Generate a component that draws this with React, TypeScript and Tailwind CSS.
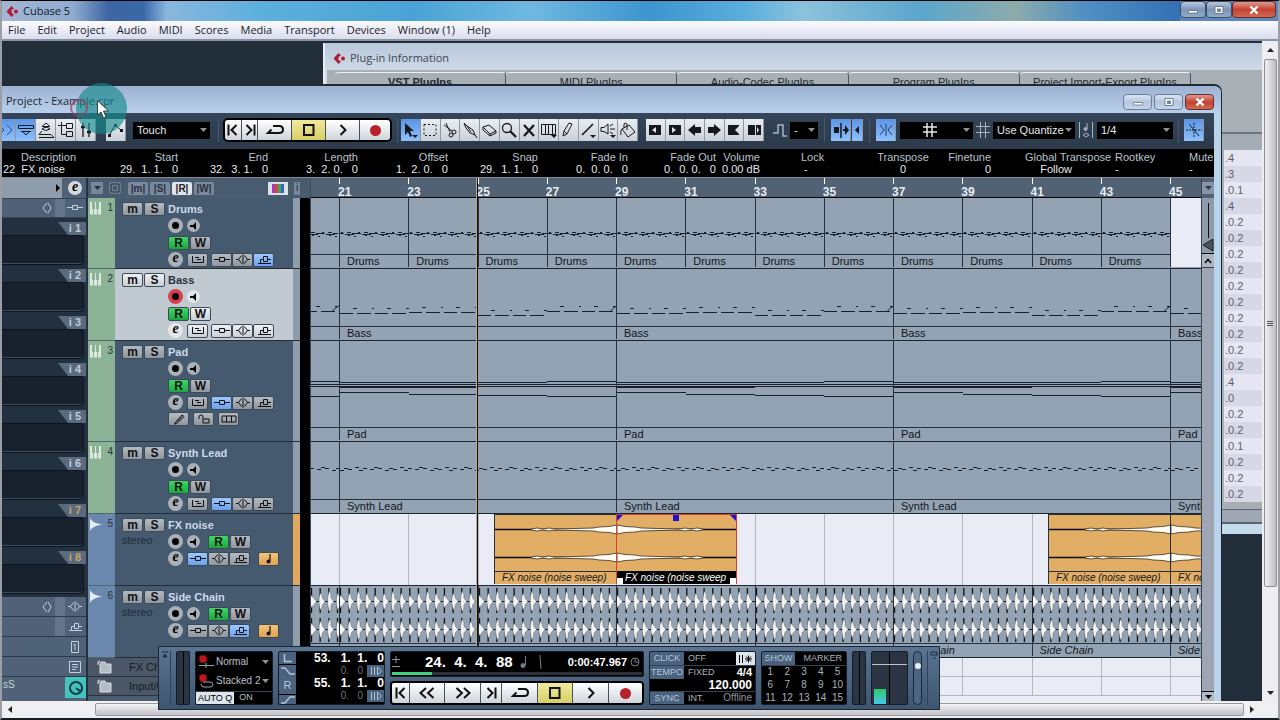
import React from "react";

type Kind = "midi" | "audio";
interface Track {
  n: number;
  name: string;
  kind: Kind;
  height: string;
  selected?: boolean;
  active?: "linear" | "musical" | "lane";
  extra?: boolean;
  strip?: string;
}

const tracks: Track[] = [
  { n: 1, name: "Drums", kind: "midi", height: "h-[71px]", active: "lane" },
  { n: 2, name: "Bass", kind: "midi", height: "h-[72px]", selected: true },
  { n: 3, name: "Pad", kind: "midi", height: "h-[101px]", active: "linear", extra: true },
  { n: 4, name: "Synth Lead", kind: "midi", height: "h-[72px]", active: "linear" },
  { n: 5, name: "FX noise", kind: "audio", height: "h-[72px]", active: "linear", strip: "bg-[#e2a65c]" },
  { n: 6, name: "Side Chain", kind: "audio", height: "h-[72px]", active: "lane" },
];

/* ---------- icons ---------- */

const glyphs: Record<string, React.ReactNode> = {
  linear: <path d="M1 5.500H6M12 5.500H17M6.500 3.500H11.500V7.500H6.500Z" />,
  musical: <path d="M2 5.500H5M13 5.500H16M9 0.500V10.500M7.500 1.500L4.500 5.500L7.500 9.500M10.500 1.500L13.500 5.500L10.500 9.500" />,
  lane: <path d="M3 9.500H16M5.500 9V5.500H8M8.500 2.500H12.500V7.500H8.500ZM13 5.500H16" />,
  inserts: <path d="M3.500 2V8.500H14.500V2M6 3.500H10M8 5.500H12" />,
  pencil: <path d="M5 10L12 2L14 3.500L7 10.500L4.500 11ZM6.500 9L12 3.500" />,
  lock: <path d="M8 6H14V10H8ZM4 6V4Q4 2 6 2Q8 2 8 4V6" />,
  film: <path d="M2 3H16V9H2ZM6.500 3V9M11.500 3V9" />,
};

function Svg({ w, h, children, className = "" }: { w: number; h: number; children: React.ReactNode; className?: string }) {
  return (
    <svg width={w} height={h} viewBox={`0 0 ${w} ${h}`} fill="none" stroke="currentColor" className={`shrink-0 ${className}`} aria-hidden="true">
      {children}
    </svg>
  );
}

function Logo() {
  return (
    <Svg w={13} h={13} className="text-[#b01c38]">
      <path d="M5.500 1L0.500 6.500L5.500 12L8 9.500L5.500 8V5L8 3.500Z" fill="#b01c38" stroke="none" />
      <circle cx="10" cy="6.500" r="2" fill="#b01c38" stroke="none" />
    </Svg>
  );
}

function Caret({ className = "text-[#8b939c]" }: { className?: string }) {
  return (
    <Svg w={7} h={4} className={className}>
      <path d="M0 0H7L3.500 4Z" fill="currentColor" stroke="none" />
    </Svg>
  );
}

/* ---------- window chrome ---------- */

function WinButton({ kind, large }: { kind: "min" | "max" | "close"; large?: boolean }) {
  const color =
    kind === "close"
      ? "bg-linear-to-b from-[#dc9a90] via-[#c4402f] to-[#cf6a55] text-white border-[#6b2a2a]"
      : large
        ? "bg-linear-to-b from-[#b9c8dc] via-[#7d95b8] to-[#93abc9] text-white border-[#3c4d66]"
        : "bg-linear-to-b from-[#dde7f4] via-[#b3c5de] to-[#c6d6ea] text-white border-[#6a7c98]";
  const size = large ? (kind === "close" ? "w-11 h-[17px]" : "w-[26px] h-[17px]") : "w-[29px] h-4";
  return (
    <button aria-label={kind} className={`flex items-center justify-center rounded-sm border ${color} ${size}`}>
      <Svg w={12} h={10}>
        {kind === "min" && <path d="M1.500 5.500H10.500V8H1.500Z" fill="#fff" stroke="#55657c" strokeWidth="0.700" />}
        {kind === "max" && (
          <g>
            <path d="M2 1.500H10V8.500H2Z" fill="#fff" stroke="#55657c" strokeWidth="0.800" />
            <path d="M4.500 4H7.500V6.500H4.500Z" fill="#7d95b8" stroke="#55657c" strokeWidth="0.800" />
          </g>
        )}
        {kind === "close" && <path d="M2.500 1.500L9.500 8.500M9.500 1.500L2.500 8.500" stroke="#fff" strokeWidth="2.400" />}
      </Svg>
    </button>
  );
}

function TitleBar() {
  return (
    <header className="flex h-[20px] shrink-0 items-center">
      <div className="flex h-full flex-1 items-center bg-[linear-gradient(90deg,#a3b6d4_0%,#91abd0_6%,#3d66a3_9%,#3a68a8_12%,#8ab6de_14%,#5bb0dd_22%,#4aa3d6_35%,#6fb8e0_45%,#3d94cf_55%,#59aedd_63%,#8cc2dc_68%,#5aa6cc_78%,#8dabab_86%,#4f8fc4_92%,#3370b4_100%)] pl-1">
        <Logo />
        <h1 className="ml-1 font-[Open_Sans,sans-serif] text-[11px] leading-5 text-[#101b2b]">Cubase 5</h1>
      </div>
      <div className="flex h-full items-start bg-[#5c88bb] pr-[2px]">
        <WinButton kind="min" large />
        <WinButton kind="max" large />
        <WinButton kind="close" large />
      </div>
    </header>
  );
}

const menus = ["File", "Edit", "Project", "Audio", "MIDI", "Scores", "Media", "Transport", "Devices", "Window (1)", "Help"];

function MenuBar() {
  return (
    <nav className="flex h-5 shrink-0 items-center gap-3 border-b-2 border-[#8c93a0] bg-linear-to-b from-[#fbfbfe] to-[#d9dcee] pl-[6px] font-[Open_Sans,sans-serif] text-[11px] text-[#1c1c28]">
      {menus.map((m) => (
        <button key={m} className="leading-4">
          {m}
        </button>
      ))}
    </nav>
  );
}

/* ---------- plug-in information window ---------- */

const versions = [".4", ".3", ".0.1", ".4", ".0.2", ".0.2", ".0.2", ".0.2", ".0.2", ".0.2", ".0.2", ".0.2", ".0.2", ".0.2", ".4", ".0", ".0.2", ".0.2", ".0.1", ".0.2", ".0.2", ".0.2"];
const pluginTabs = ["VST PlugIns", "MIDI PlugIns", "Audio-Codec PlugIns", "Program PlugIns", "Project Import-Export PlugIns"];

function PluginWindow() {
  return (
    <section className="absolute top-[2px] right-0 left-[321px] flex h-[491px] flex-col border-l-2 border-[#e8eef5] bg-[#a8b0b6]">
      <div className="flex h-[27px] shrink-0 items-center gap-1 bg-linear-to-b from-[#b8c7da] to-[#ced9e6] pt-1 pl-2">
        <Logo />
        <h2 className="font-[Open_Sans,sans-serif] text-[11px] text-[#3c4655]">Plug-in Information</h2>
      </div>
      <div className="flex shrink-0 border-l-2 border-[#d5dbe3] pt-[2px] pr-[71px] pl-2">
        {pluginTabs.map((t, i) => (
          <button
            key={t}
            className={`h-5 flex-1 truncate rounded-t border-t border-r border-t-[#eef0f2] border-r-[#4d545b] text-[11px] text-[#23282e] ${i === 0 ? "font-bold" : ""}`}
          >
            {t}
          </button>
        ))}
      </div>
      <div className="h-[42px] shrink-0 border-b-2 border-[#6c757d]" />
      <div className="h-4 shrink-0 bg-[#a5adb4]" />
      <div className="flex min-h-0 flex-1 flex-col items-end overflow-hidden">
        {versions.map((v, i) => (
          <div key={i} className={`h-4 w-[38px] shrink-0 pl-[1px] text-[11px] leading-4 text-[#5c5f6a] ${i % 2 ? "bg-[#d7d7e6]" : "bg-[#e6e6f2]"}`}>
            {v}
          </div>
        ))}
      </div>
      <div className="h-[15px] shrink-0 border-t border-b-2 border-[#5b646e] bg-[#9ea7b3]" />
      <div className="h-2.5 shrink-0 bg-[#c4dcec]" />
    </section>
  );
}

/* ---------- project toolbar ---------- */

function ToolBtn({ label, on, w = "w-5", children }: { label: string; on?: boolean; w?: string; children: React.ReactNode }) {
  return (
    <button
      aria-label={label}
      className={`flex h-[22px] shrink-0 items-center justify-center border-r border-[#8f979f] text-[#15181c] ${w} ${on ? "bg-linear-to-b from-[#5c94e6] to-[#8fc0fb]" : "bg-linear-to-b from-[#e9eef2] to-[#c9d1d8]"}`}
    >
      <Svg w={18} h={18}>{children}</Svg>
    </button>
  );
}

function Drop({ label, value, w }: { label: string; value: string; w: string }) {
  return (
    <label className={`flex h-[17px] shrink-0 items-center bg-black pr-[3px] pl-1 ${w}`}>
      <select aria-label={label} className="min-w-0 flex-1 appearance-none bg-transparent text-[11px] leading-4 text-[#e2e8ee] outline-none">
        <option>{value}</option>
      </select>
      <Caret />
    </label>
  );
}

const Sep = () => <span className="block h-6 w-px shrink-0 bg-[#47586c]" />;

function TransportKey({ label, w, on, children }: { label: string; w: string; on?: boolean; children: React.ReactNode }) {
  return (
    <button
      aria-label={label}
      className={`flex h-full items-center justify-center border-r border-[#4a5059] text-[#111] last:border-r-0 ${w} ${on ? "bg-linear-to-b from-[#f0ea9c] to-[#d8cf62]" : "bg-linear-to-b from-[#ffffff] to-[#cfd5dc]"}`}
    >
      {children}
    </button>
  );
}

const icoPrev = <Svg w={12} h={14}><path d="M1.500 1.500V12.500M9.500 2L4.500 7L9.500 12" strokeWidth="2" /></Svg>;
const icoNext = <Svg w={12} h={14}><path d="M10.500 1.500V12.500M2.500 2L7.500 7L2.500 12" strokeWidth="2" /></Svg>;
const icoCycle = <Svg w={20} h={14}><path d="M8 3H15Q18 3.500 18 6.500Q18 10 14 10H3M6.500 6.500L3 10H10" strokeWidth="2" /></Svg>;
const icoStop = <Svg w={14} h={14}><path d="M2 2H11.500V12H2Z" strokeWidth="2" /></Svg>;
const icoPlay = <Svg w={10} h={14}><path d="M2.500 2L7.500 7L2.500 12" strokeWidth="2" /></Svg>;
const icoRew = <Svg w={18} h={14}><path d="M8 2L2.500 7L8 12M15.500 2L10 7L15.500 12" strokeWidth="2" /></Svg>;
const icoFwd = <Svg w={18} h={14}><path d="M2.500 2L8 7L2.500 12M10 2L15.500 7L10 12" strokeWidth="2" /></Svg>;
const icoRec = <span className="size-[11px] rounded-full bg-[#b8202a]" />;

const corner = <path d="M11 14H17L14 17Z" fill="currentColor" stroke="none" />;

function Toolbar() {
  return (
    <div className="flex h-9 shrink-0 items-center bg-linear-to-b from-[#35465a] to-[#2b394a] pb-[2px]">
      <div className="flex">
        <ToolBtn label="Setup" on w="w-[14px]"><path d="M1 6L4 9L1 12M7 4L12 9L7 14" stroke="#2c4f8c" /></ToolBtn>
        <ToolBtn label="Info Line" on><path d="M1.500 4.500H16.500V7.500H1.500ZM4 10.500H14M6 11L9 14L12 11" /></ToolBtn>
        <ToolBtn label="Overview"><path d="M9 2L5 5.500H13ZM5 8Q9 4.500 13 8Q9 11 5 8M5 10L2 13.500H14M2 16.500H17L14 13.500" /></ToolBtn>
        <ToolBtn label="Pool"><path d="M1 4.500H9M4.500 1V13.500H9M9.500 2.500H15.500V7.500H9.500ZM9.500 10.500H15.500V15.500H9.500Z" /></ToolBtn>
        <ToolBtn label="Mixer"><path d="M6 2V16M12 2V16" strokeWidth="1.300" /><path d="M4 6H8M10 11H14" strokeWidth="2.500" /></ToolBtn>
      </div>
      <div className="ml-[10px]">
        <ToolBtn label="Automation"><path d="M2 15L8 4L15 10" /><path d="M1 13H4V16H1ZM7 3H10V6H7ZM13 8H16V11H13Z" fill="currentColor" stroke="none" /></ToolBtn>
      </div>
      <div className="mr-2 ml-[7px]"><Drop label="Automation mode" value="Touch" w="w-[77px]" /></div>
      <Sep />
      <div className="mr-[5px] ml-1 flex h-6 shrink-0 overflow-hidden rounded-[5px] border-2 border-black">
        <TransportKey label="Previous" w="w-[17px]">{icoPrev}</TransportKey>
        <TransportKey label="Next" w="w-4">{icoNext}</TransportKey>
        <TransportKey label="Cycle" w="w-[34px]">{icoCycle}</TransportKey>
        <TransportKey label="Stop" w="w-[34px]" on>{icoStop}</TransportKey>
        <TransportKey label="Play" w="w-[34px]">{icoPlay}</TransportKey>
        <TransportKey label="Record" w="w-[30px]">{icoRec}</TransportKey>
      </div>
      <Sep />
      <div className="ml-[3px] grid w-[237px] shrink-0 grid-cols-12">
        <ToolBtn w="w-auto" label="Select" on><path d="M4 2V14L7 11L9 16L11 15L9 10L13 10Z" fill="currentColor" stroke="none" />{corner}</ToolBtn>
        <ToolBtn w="w-auto" label="Range"><path d="M3 3.500H15V14.500H3Z" strokeDasharray="2 2" /></ToolBtn>
        <ToolBtn w="w-auto" label="Split"><path d="M3 4L11 10M5 2L9 11" /><circle cx="13" cy="11" r="2" /><circle cx="10" cy="14" r="2" /></ToolBtn>
        <ToolBtn w="w-auto" label="Glue"><path d="M3 2L6 5L12 9L14 14L9 12L5 7ZM14 14L16 17M6 5L10 11" /></ToolBtn>
        <ToolBtn w="w-auto" label="Erase"><path d="M3 6L9 4L16 10L10 13ZM3 6V9L10 15V13M10 15L16 12V10" /></ToolBtn>
        <ToolBtn w="w-auto" label="Zoom"><circle cx="7" cy="7" r="4.500" strokeWidth="1.300" /><path d="M10 10L16 16" strokeWidth="2.200" /></ToolBtn>
        <ToolBtn w="w-auto" label="Mute"><path d="M4 4L14 15M14 4L4 15" strokeWidth="2.200" /></ToolBtn>
        <ToolBtn w="w-auto" label="Time Warp"><path d="M1.500 3.500H15.500V13.500H1.500ZM5.500 3V13M8.500 3V13M12.500 3V13" />{corner}</ToolBtn>
        <ToolBtn w="w-auto" label="Draw"><path d="M4 15L5 10L10 2L13 3L8 13ZM5 10L8 13" /></ToolBtn>
        <ToolBtn w="w-auto" label="Line"><path d="M3 14L14 3" strokeWidth="1.600" />{corner}</ToolBtn>
        <ToolBtn w="w-auto" label="Play tool"><path d="M2 6.500H5L9 3V13L5 10.500H2ZM11 8H16M11 5L14 3M11 11L14 13" />{corner}</ToolBtn>
        <ToolBtn w="w-auto" label="Color"><path d="M3 8L10 4L16 11L9 16ZM3 8Q1 10 2 14M8 9V3Q6 1 5 3V7" /></ToolBtn>
      </div>
      <div className="mr-2 ml-[8px] grid w-[118px] shrink-0 grid-cols-6">
        {[
          <path key="a" d="M3 4H15V14H3ZM10 6L6 9L10 12Z" fill="currentColor" fillRule="evenodd" stroke="none" />,
          <path key="b" d="M3 4H15V14H3ZM6 6L10 9L6 12Z" fill="currentColor" fillRule="evenodd" stroke="none" />,
          <path key="c" d="M2 9L9 3V6H15V12H9V15Z" fill="currentColor" stroke="none" />,
          <path key="d" d="M16 9L9 3V6H3V12H9V15Z" fill="currentColor" stroke="none" />,
          <path key="e" d="M3 4H14V5L10 9L14 13V14H3Z" fill="currentColor" stroke="none" />,
          <path key="f" d="M3 4H10V14H3ZM11 4H16V14H11ZM12 6L14 9L12 12Z" fill="currentColor" fillRule="evenodd" stroke="none" />,
        ].map((p, i) => (
          <ToolBtn key={i} w="w-auto" label={`Nudge ${i + 1}`}>{p}</ToolBtn>
        ))}
      </div>
      <Svg w={18} h={18} className="text-[#a9b3be]"><path d="M1 12H6V4H11V15H15" strokeWidth="1.500" /></Svg>
      <div className="mr-1.5"><Drop label="Fade" value=" -" w="w-[28px]" /></div>
      <Sep />
      <div className="mx-1.5 flex gap-px">
        <ToolBtn label="Autoscroll" on><path d="M9 2V17" strokeWidth="1.500" /><path d="M2 6H7V12H2ZM11 8H13V4L17 9L13 14V10H11Z" fill="currentColor" stroke="none" /></ToolBtn>
        <ToolBtn label="Suspend" on w="w-[11px]"><path d="M11 5V13L7 9Z" fill="currentColor" stroke="none" /></ToolBtn>
      </div>
      <Sep />
      <div className="mr-1 ml-1.5"><ToolBtn label="Snap" on><path d="M9 3V15M3 4L7 9L3 14M15 4L11 9L15 14" stroke="#203a68" /></ToolBtn></div>
      <label className="flex h-[17px] w-[73px] shrink-0 items-center justify-end bg-black pr-[3px] text-[#e2e8ee]">
        <Svg w={16} h={14} className="mr-[25px]"><path d="M1 4H15M1 9H15M5 0V14M10 0V14" strokeWidth="1.500" /></Svg>
        <select aria-label="Snap type" className="w-0 appearance-none"><option>Grid</option></select>
        <Caret />
      </label>
      <Svg w={14} h={16} className="mx-[3px] text-[#a9b3be]"><path d="M0 4.500H14M0 10.500H14M4.500 0V16M9.500 0V16" /></Svg>
      <Drop label="Grid type" value="Use Quantize" w="w-[82px]" />
      <Svg w={16} h={18} className="mx-[3px] text-[#a9b3be]"><path d="M1.500 1V17M14.500 1V17M9 2V8M8 12L5 14L8 16L11 14Z" /><circle cx="7.500" cy="8" r="1.500" fill="currentColor" /></Svg>
      <Drop label="Quantize" value="1/4" w="w-[76px]" />
      <span className="ml-[5px]"><Sep /></span>
      <div className="ml-[5px]"><ToolBtn label="Snap to zero crossing" on><path d="M1 9H17M9 2V16" strokeDasharray="2 1" /><path d="M4 3L14 15" /></ToolBtn></div>
    </div>
  );
}

const info: { k: string; v: string; c: string }[] = [
  { k: "Start", v: "29.  1. 1.   0", c: "w-[90px] text-right" },
  { k: "End", v: "32.  3. 1.   0", c: "w-[90px] text-right" },
  { k: "Length", v: "3.  2. 0.   0", c: "w-[90px] text-right" },
  { k: "Offset", v: "1.  2. 0.   0", c: "w-[90px] text-right" },
  { k: "Snap", v: "29.  1. 1.   0", c: "w-[90px] text-right" },
  { k: "Fade In", v: "0.  0. 0.   0", c: "w-[90px] text-right" },
  { k: "Fade Out", v: "0.  0. 0.   0", c: "w-[88px] text-right" },
  { k: "Volume", v: "0.00 dB", c: "w-[44px] text-right" },
  { k: "Lock", v: " -", c: "w-[117px] pl-[41px]" },
  { k: "Transpose", v: "0", c: "w-[52px] text-center" },
  { k: "Finetune", v: "0", c: "w-[62px] text-right" },
  { k: "Global Transpose", v: "     Follow", c: "w-[124px] pl-[34px]" },
  { k: "Rootkey", v: "-", c: "w-[74px]" },
  { k: "Mute", v: "-", c: "w-[24px]" },
];

function InfoLine() {
  return (
    <dl className="flex h-7 shrink-0 overflow-hidden bg-black pt-[2px] text-[11px] leading-[12px] whitespace-pre text-[#e4e8ec]">
      <div className="w-[86px] shrink-0 pl-[1px]">
        <dt className="pl-[18px] text-[#b9c2cd]">Description</dt>
        <dd>22  FX noise</dd>
      </div>
      {info.map((f) => (
        <div key={f.k} className={`shrink-0 ${f.c}`}>
          <dt className="text-[#b9c2cd]">{f.k}</dt>
          <dd>{f.v}</dd>
        </div>
      ))}
    </dl>
  );
}

/* ---------- inspector ---------- */

function Round({ label, children, className }: { label: string; children: React.ReactNode; className: string }) {
  return (
    <button aria-label={label} className={`flex shrink-0 items-center justify-center rounded-full ${className}`}>
      {children}
    </button>
  );
}

const eGlyph = <span className="pb-[3px] font-[Liberation_Serif,serif] text-[14px] leading-[12px] font-bold italic">e</span>;

const inspectorTail = ["musical", "lane", "info", "notes"];

function Inspector() {
  return (
    <aside className="flex w-[86px] shrink-0 flex-col border-r-2 border-[#25313e] bg-[#506277] text-[#c5d0dc]">
      <div className="flex h-5 shrink-0 items-center">
        <div className="flex h-full w-[60px] items-center justify-end bg-[#8f9cac] pr-px">
          <Svg w={5} h={8} className="text-black"><path d="M0 0V8L4 4Z" fill="currentColor" stroke="none" /></Svg>
        </div>
        <Round label="Edit channel" className="ml-1.5 size-[14px] bg-[#d4dae0] text-black">{eGlyph}</Round>
      </div>
      <div className="flex h-5 shrink-0 items-center border-y border-[#334253]">
        <Svg w={10} h={12} className="ml-10"><path d="M5 1L1 6L5 11M6 1L9 6L6 11" /></Svg>
        <span className="ml-[3px] h-full w-[10px] bg-[#64758a]" />
        <Svg w={18} h={12} className="ml-px">{glyphs.linear}</Svg>
      </div>
      {[1, 2, 3, 4, 5, 6, 7, 8].map((i) => (
        <div key={i} className="flex h-[47px] shrink-0 flex-col bg-[#223040]">
          <div className="flex h-[17px] justify-end">
            <span
              className={`mt-[4px] h-[13px] w-7 bg-[#5a6b7f] pr-[5px] text-right text-[11px] leading-[13px] font-bold [clip-path:polygon(0_0,100%_0,100%_100%,36%_100%)] ${i > 6 ? "text-[#c9a55e]" : "text-[#c3ccd7]"}`}
            >
              i {i}
            </span>
          </div>
          <div className="mr-[2px] flex-1 rounded-r border border-l-0 border-[#0c141d] bg-[#17222e] shadow-[inset_0_-1px_#3b4c5f]" />
        </div>
      ))}
      <div className="h-[3px] shrink-0 bg-[#223040]" />
      {inspectorTail.map((g, i) => (
        <div key={g} className="flex h-5 shrink-0 items-center border-b border-[#2c3a4a]">
          {i === 0 ? <Svg w={10} h={12} className="ml-10"><path d="M5 1L1 6L5 11M6 1L9 6L6 11" /></Svg> : <span className="ml-10 w-[10px]" />}
          <span className={`mr-px ml-[3px] h-full w-[10px] ${i < 2 ? "bg-[#64758a]" : ""}`} />
          <Svg w={18} h={12}>
            {glyphs[g] ?? (g === "info" ? <path d="M5.500 0.500H12.500V11.500H5.500ZM9 3V9M7.500 4L9 3" /> : <path d="M3.500 0.500H14.500V11.500H3.500ZM6 3.500H12M6 6H12M6 8.500H10" />)}
          </Svg>
        </div>
      ))}
      <div className="flex flex-1 items-start justify-between pl-px text-[10px]">
        <span>sS</span>
        <button aria-label="Quick controls" className="flex size-[21px] items-center justify-center bg-[#44c2be] text-[#0f3c44]">
          <Svg w={16} h={16}><circle cx="8" cy="8" r="6" strokeWidth="2" /><path d="M8 8L12 11" strokeWidth="2" /></Svg>
        </button>
      </div>
    </aside>
  );
}

/* ---------- track list ---------- */

function Chip({ label, tone, children }: { label: string; tone: "plain" | "blue" | "green" | "light" | "orange"; children: React.ReactNode }) {
  const tones = {
    plain: "bg-linear-to-b from-[#b4bac1] to-[#8f969e]",
    blue: "bg-linear-to-b from-[#9cc8ff] to-[#6aa2ee]",
    green: "bg-linear-to-b from-[#41d668] to-[#17a83e]",
    light: "bg-linear-to-b from-[#eef1f4] to-[#cbd0d6]",
    orange: "bg-linear-to-b from-[#f3c57c] to-[#dfa04f]",
  };
  return (
    <button
      aria-label={label}
      className={`flex h-[14px] w-[21px] shrink-0 items-center justify-center rounded-xs border border-[#3d4955] text-[12px] leading-[12px] font-bold text-[#0e1013] ${tones[tone]}`}
    >
      {children}
    </button>
  );
}

function TrackRow({ t }: { t: Track }) {
  const base = t.selected ? "light" : "plain";
  const round = t.selected ? "bg-[#e3e7eb] text-black" : "bg-[#a9b0b8] text-black";
  const midi = t.kind === "midi";
  const rw = (
    <>
      <Chip label={`${t.name} read`} tone="green">R</Chip>
      <Chip label={`${t.name} write`} tone={base}>W</Chip>
    </>
  );
  return (
    <li className={`flex shrink-0 ${t.height}`}>
      <div className={`flex w-[27px] shrink-0 justify-between border-b border-[#4d6a6c] pt-[4px] pr-[2px] pl-[2px] text-[10px] leading-[12px] text-[#26323c] ${midi ? "bg-[#8db396]" : "bg-[#6a88ae]"}`}>
        {midi ? (
          <Svg w={12} h={13} className="text-[#dce9e0]">
            <path d="M0 0H2V7H3V12.500H0ZM4 7H5V0H6V7H7V12.500H4ZM8 7H9V0H11V12.500H8Z" fill="currentColor" stroke="none" />
          </Svg>
        ) : (
          <Svg w={12} h={13} className="text-[#e4ecf5]"><path d="M0 0Q2 5 12 6.500Q2 8 0 13Z" fill="currentColor" stroke="none" /></Svg>
        )}
        {t.n}
      </div>
      <div className={`flex min-w-0 flex-1 border-b border-[#222d39] pt-[4px] pl-[7px] ${t.selected ? "bg-[#c1c9d1]" : "bg-[#465a6f]"}`}>
        <div className="w-[45px] shrink-0">
          <div className="flex gap-px">
            <Chip label={`Mute ${t.name}`} tone={base}>m</Chip>
            <Chip label={`Solo ${t.name}`} tone={base}>S</Chip>
          </div>
          {!midi && <div className="mt-[2px] text-[11px] leading-[13px] text-[#202b37]">stereo</div>}
        </div>
        <div className="flex flex-col gap-[2px] pl-[1px]">
          <div className={`h-[14px] text-[11px] leading-[14px] font-bold ${t.selected ? "text-[#2b333c]" : "text-[#ccd9ea]"}`}>{t.name}</div>
          <div className="flex h-[15px] items-center gap-1">
            <Round label={`Record ${t.name}`} className={`size-[15px] ${t.selected ? "bg-[#d5404c]" : round}`}>
              <span className="size-[7px] rounded-full bg-black" />
            </Round>
            <Round label={`Monitor ${t.name}`} className={`size-[13px] ${round}`}>
              <Svg w={8} h={8}><path d="M0 3H3L6 0V8L3 5H0Z" fill="currentColor" stroke="none" /></Svg>
            </Round>
            {!midi && <div className="ml-1 flex gap-px">{rw}</div>}
          </div>
          {midi && <div className="flex h-[15px] items-center gap-px">{rw}</div>}
          <div className="flex h-[15px] items-center">
            <Round label={`Edit ${t.name}`} className={`mr-[4px] size-[15px] ${round}`}>{eGlyph}</Round>
            {midi && <span className="mr-[3px] flex"><Chip label="Inserts" tone={base}><Svg w={18} h={11}>{glyphs.inserts}</Svg></Chip></span>}
            {(["linear", "musical", "lane"] as const).map((g) => (
              <Chip key={g} label={g} tone={t.active === g ? "blue" : base}>
                <Svg w={18} h={11}>{glyphs[g]}</Svg>
              </Chip>
            ))}
            {!midi && (
              <span className="ml-2 flex">
                <Chip label="Time base" tone="orange">
                  <Svg w={8} h={11}><path d="M5 1V8" strokeWidth="1.200" /><circle cx="3.500" cy="8.500" r="2" fill="currentColor" stroke="none" /></Svg>
                </Chip>
              </span>
            )}
          </div>
          {t.extra && (
            <div className="flex items-center gap-[4px]">
              {["pencil", "lock", "film"].map((g) => (
                <Chip key={g} label={g} tone="plain"><Svg w={18} h={12}>{glyphs[g]}</Svg></Chip>
              ))}
            </div>
          )}
        </div>
      </div>
      <div className={`w-[7px] shrink-0 border-b border-[#222d39] ${t.strip ?? "bg-[#8f9cac]"}`} />
    </li>
  );
}

function TrackList() {
  return (
    <div className="flex w-[212px] shrink-0 flex-col bg-[#4a5c70]">
      <div className="flex h-5 shrink-0 items-center gap-[2px] bg-[#495b6f] pl-[3px] text-[10px] text-[#27323e]">
        <button aria-label="Track menu" className="flex size-3 items-center justify-center bg-[#77869a]"><Caret className="text-[#27323e]" /></button>
        <button aria-label="Track folder" className="ml-1 flex size-3 items-center justify-center rounded-xs bg-[#6d7c8f]">
          <Svg w={10} h={10}><path d="M1 1H9V9H1ZM3 4H7M3 6H7" /></Svg>
        </button>
        {["m", "S", "R", "W"].map((l) => (
          <button
            key={l}
            aria-label={`All ${l}`}
            className={`h-[13px] w-5 rounded-xs text-center text-[10px] leading-[13px] font-bold ${l === "m" ? "ml-[5px]" : ""} ${l === "R" ? "bg-[#dfe6ee] text-[#222]" : "bg-[#7a899c]"}`}
          >
            |{l}|
          </button>
        ))}
        <button aria-label="Track colors" className="mr-1 ml-auto flex h-[13px] w-5 items-center justify-center bg-[#dce2ea]">
          <span className="h-[9px] w-[3px] bg-[#a53bb5]" />
          <span className="h-[9px] w-[3px] bg-[#d0463c]" />
          <span className="h-[9px] w-[3px] bg-[#3da557]" />
          <span className="h-[9px] w-[3px] bg-[#3b62c5]" />
        </button>
        <button aria-label="Divide" className="h-[13px] w-[6px] bg-[#76869a] text-[10px] leading-3">i</button>
      </div>
      <ul className="flex flex-1 flex-col">
        {tracks.map((t) => (
          <TrackRow key={t.n} t={t} />
        ))}
        {["FX Channels", "Input/Output Channels"].map((f) => (
          <li key={f} className="flex h-[19px] shrink-0 items-center gap-4 overflow-hidden border-b border-[#27323e] bg-[#4b5766] pl-[9px] text-[11px] whitespace-nowrap text-[#141b22]">
            <Svg w={16} h={14} className="text-[#d7dde4]"><path d="M3 13H14V4H9L8 2H4L3 4ZM1 5V2Q1 1 3 1" fill="#b4bcc6" /></Svg>
            {f}
          </li>
        ))}
      </ul>
    </div>
  );
}

/* ---------- arrangement ---------- */

const cell = [0, 1, 2, 3];

function Ruler() {
  return (
    <div className="flex h-5 shrink-0 overflow-hidden border-b border-black bg-[#506273] pl-7 text-[12px] leading-none font-bold text-[#e6edf4]">
      {[21, 29, 37].map((b) => (
        <div key={b} className="grid w-[277px] shrink-0 grid-cols-4">
          {cell.map((c) => (
            <div key={c}>
              <div className="h-[6px] w-px bg-white" />
              <div className="-ml-px pt-[2px]">{b + c * 2}</div>
            </div>
          ))}
        </div>
      ))}
      <div>
        <div className="h-[6px] w-px bg-white" />
        <div className="-ml-px pt-[2px]">45</div>
      </div>
    </div>
  );
}

function Part({ name, className, children, bare, small }: { name?: string; className: string; children?: React.ReactNode; bare?: boolean; small?: boolean }) {
  return (
    <div className={`flex min-w-0 shrink-0 flex-col overflow-hidden border-[#24303c] ${bare ? "" : "border-l"} ${className}`}>
      <div className="min-h-0 flex-1 overflow-hidden">{children}</div>
      <div className={`h-[13px] shrink-0 overflow-hidden border-t border-[#24303c] pl-[7px] leading-[12px] whitespace-nowrap text-[#10151a] ${small ? "text-[10px]" : "text-[11px]"}`}>{name}</div>
    </div>
  );
}

/** A view onto notes drawn for an eight-bar phrase (277 units wide). */
function Notes({ from, w, h, top = 0, children }: { from: number; w: number; h: number; top?: number; children: React.ReactNode }) {
  return (
    <svg width={w} height={h} viewBox={`${from} ${top} ${w} ${h}`} fill="none" stroke="#18202a" strokeWidth="1" aria-hidden="true" className="block">
      {children}
    </svg>
  );
}

const drumNotes = (
  <g>
    {[0, 1, 2, 3].map((b) => {
      const x = b * 17;
      return (
        <path key={b} d={`M${x} 35.500H${x + 4}M${x + 5} 36.500H${x + 14}M${x + 7} 34.500H${x + 11}M${x + 8} 37.500H${x + 10}M${x + 12} 35.500H${x + 17}M${x + 14} 38.500H${x + 16}M${x + 1} 34.500H${x + 3}`} />
      );
    })}
  </g>
);

const bassLevels = [43, 42, 45, 41];
const bassNotes = (
  <g>
    {bassLevels.map((y, s) => {
      const x = s * 69;
      return (
        <path
          key={s}
          d={`M${x} ${y + 0.5}H${x + 13}M${x + 17} ${y + 0.5}H${x + 31}M${x + 35} ${y + 0.5}H${x + 48}M${x + 52} ${y + 0.5}H${x + 66}M${x + 13} ${y - 4.5}H${x + 17}M${x + 32} ${y - 4.5}H${x + 34}M${x + 47} ${y - 4.5}H${x + 51}M${x + 66} ${y - 4.5}H${x + 69}`}
        />
      );
    })}
    <path d="M270 41.500L273 38.500L277 35.500" />
  </g>
);

const padNotes = (
  <path d="M0 40.500H207M207 39.500H277M0 42.500H277M0 45.500H138M0 44.500H277M0 50.500H69M69 52.500H138M138 53.500H207M207 54.500H277" />
);

const synthLevels = [27, 25, 26, 24, 27, 25, 26, 24, 25];
const synthNotes = (
  <path
    d={Array.from({ length: 60 }, (_, i) => `M${i * 5 - (i % 3)} ${synthLevels[i % 9] + 0.5}h4`).join("")}
  />
);

function Hits() {
  const centres = [14, 42];
  return (
    <svg width="139" height="56" viewBox="0 -1 139 56" aria-hidden="true" className="block">
      <path d="M0 14.500H139M0 42.500H139" stroke="#14181c" />
      {Array.from({ length: 16 }, (_, i) => {
        const x = i * 8.66;
        const a = [6, 8, 10, 8][i % 4];
        return (
          <g key={i}>
            <path d={`M${x + 0.5} 1V26M${x + 0.5} 31V55`} stroke="#0c0f12" strokeWidth="1.300" />
            {centres.map((c) => (
              <path key={c} d={`M${x + 0.6} ${c - a}L${x + 2.6} ${c - a + 3}V${c - 3}L${x + 5.5} ${c + 0.5}L${x + 2.6} ${c + 4}V${c + a - 2}L${x + 0.6} ${c + a + 1}L${x - 0.6} ${c + 3}V${c - 3}Z`} fill="#f4f4f2" stroke="#22282e" strokeWidth="0.300" />
            ))}
          </g>
        );
      })}
    </svg>
  );
}

function Sweep({ flip }: { flip?: boolean }) {
  const d = (c: number) =>
    `M36 ${c - 0.5}L42 ${c - 1.5}L48 ${c - 0.5}L54 ${c - 1.5}L60 ${c - 0.5}L80 ${c - 1}L98 ${c - 1.5}L104 ${c - 2.5}L114 ${c - 3}L122 ${c - 4.5}V${c + 4.5}L114 ${c + 3}L104 ${c + 2.5}L98 ${c + 1.5}L80 ${c + 1}L60 ${c + 0.5}L54 ${c + 1.5}L48 ${c + 0.5}L42 ${c + 1.5}L36 ${c + 0.5}Z`;
  return (
    <svg width="122" height="56" viewBox="0 0 122 56" aria-hidden="true" className="block">
      <g transform={flip ? "matrix(-1 0 0 1 122 0)" : undefined}>
        <path d="M0 14.500H122M0 42.500H122" stroke="#0c0c0c" strokeWidth="1.600" />
        {[14.5, 42.5].map((c) => (
          <path key={c} d={d(c)} fill="#fffdf6" stroke="#241a0c" strokeWidth="0.700" />
        ))}
      </g>
    </svg>
  );
}

function GridBack() {
  return (
    <div className="absolute inset-0 flex pl-7">
      {[0, 1, 2].map((g) => (
        <div key={g} className="grid w-[277px] shrink-0 grid-cols-4">
          {cell.map((c) => (
            <div key={c} className="border-l border-[#b4b8c3]" />
          ))}
        </div>
      ))}
      <div className="border-l border-[#b4b8c3]" />
    </div>
  );
}

const lane = "relative flex shrink-0 border-b border-[#1c2631] pb-px";
const partBg = "bg-[#94a3b4]";

function PhraseLane({ height, name, notes, h }: { height: string; name: string; notes: React.ReactNode; h: number }) {
  return (
    <div className={`${lane} ${height} ${partBg}`}>
      <Part className="w-7" bare><Notes from={249} top={-1} w={28} h={h}>{notes}</Notes></Part>
      {[0, 1, 2].map((i) => (
        <Part key={i} name={name} className="w-[277px]"><Notes from={0} top={-1} w={277} h={h}>{notes}</Notes></Part>
      ))}
      <Part name={name} className="flex-1"><Notes from={0} top={-1} w={277} h={h}>{notes}</Notes></Part>
    </div>
  );
}

const clip = "bg-[#e2ae66] italic";

function Arrangement() {
  return (
    <div className="relative flex min-w-0 flex-1 flex-col overflow-hidden bg-[#e9ebf5]">
      <Ruler />
      <div className={`${lane} h-[71px] ${partBg}`}>
        <Part className="w-7" bare><Notes from={41} w={28} h={56}>{drumNotes}</Notes></Part>
        {[0, 1, 2].map((g) => (
          <div key={g} className="grid w-[277px] shrink-0 grid-cols-4">
            {cell.map((c) => (
              <Part key={c} name="Drums" className=""><Notes from={0} w={69} h={56}>{drumNotes}</Notes></Part>
            ))}
          </div>
        ))}
        <div className="flex-1 border-l border-[#24303c] bg-[#e9ebf5]" />
      </div>
      <PhraseLane height="h-[72px]" name="Bass" notes={bassNotes} h={57} />
      <PhraseLane height="h-[101px]" name="Pad" notes={padNotes} h={86} />
      <PhraseLane height="h-[72px]" name="Synth Lead" notes={synthNotes} h={57} />
      <div className={`${lane} h-[72px]`}>
        <GridBack />
        <div className="relative flex min-w-0 flex-1 pl-[183px]">
          <Part small name="FX noise (noise sweep)" className={`w-[122px] border-t ${clip}`}><Sweep /></Part>
          <div className="relative flex w-[121px] shrink-0 flex-col border border-b-0 border-[#d8402c] bg-[#e2ae66]">
            <div className="flex-1 overflow-hidden"><Sweep flip /></div>
            <div className="h-[13px] overflow-hidden bg-black pl-2 text-[10px] leading-[13px] whitespace-nowrap text-white italic">FX noise (noise sweep</div>
            <span className="absolute top-0 left-0 size-[6px] bg-[#1a12d8] [clip-path:polygon(0_0,100%_0,0_100%)]" />
            <span className="absolute top-0 left-[56px] size-[6px] bg-[#1a12d8]" />
            <span className="absolute top-0 right-0 size-[6px] bg-[#1a12d8] [clip-path:polygon(0_0,100%_0,100%_100%)]" />
            <span className="absolute bottom-0 left-0 size-[6px] bg-white" />
            <span className="absolute right-0 bottom-0 size-[6px] bg-white" />
          </div>
          <Part small name="FX noise (noise sweep)" className={`ml-[311px] w-[122px] border-t ${clip}`}><Sweep /></Part>
          <Part small name="FX noise" className={`flex-1 border-t ${clip}`}><Sweep flip /></Part>
        </div>
      </div>
      <div className={`${lane} h-[72px] ${partBg} italic`}>
        <Part className="w-7" bare><Hits /></Part>
        {[0, 1, 2].map((g) => (
          <div key={g} className="grid w-[277px] shrink-0 grid-cols-2">
            <Part name={g > 1 ? "Side Chain" : ""} className=""><Hits /></Part>
            <Part name={g > 1 ? "Side Chain" : ""} className=""><Hits /></Part>
          </div>
        ))}
        <Part name="Side Chain" className="flex-1"><Hits /></Part>
      </div>
      <div className="relative h-[19px] shrink-0 border-b border-[#b4b8c3]"><GridBack /></div>
      <div className="relative h-[19px] shrink-0 border-b border-[#b4b8c3]"><GridBack /></div>
      <div className="absolute top-0 bottom-0 left-[165px] w-[2px] border-l border-[#b9a794] bg-[#111]" />
    </div>
  );
}

function RightRail() {
  return (
    <div className="flex w-[13px] shrink-0 flex-col border-l border-[#39434f] bg-[#9ea6b5]">
      <div className="flex h-5 shrink-0 items-center justify-center bg-[#506273]">
        <button aria-label="Ruler menu" className="flex size-3 items-center justify-center bg-[#8594a6]"><Caret className="text-[#2c3844]" /></button>
      </div>
      <div className="h-14 shrink-0 border-b border-black bg-[#8d9bab]">
        <Svg w={12} h={55}><path d="M6.500 5V40" stroke="#111" /><path d="M11 41V53L1 47Z" fill="#46545f" stroke="#222" /></Svg>
      </div>
      <button aria-label="Scroll up" className="flex h-[14px] shrink-0 items-center justify-center border-b border-[#39434f] bg-[#aeb6c2] text-black">
        <Svg w={8} h={6}><path d="M1 5L4 1.500L7 5" strokeWidth="1.500" /></Svg>
      </button>
      <div className="flex-1" />
      <div className="flex h-[10px] shrink-0 items-center justify-center border-t border-black bg-[#b3bac6]"><Caret className="text-black" /></div>
    </div>
  );
}

function ProjectWindow() {
  return (
    <section className="absolute top-[43px] right-10 bottom-0 left-0 flex flex-col rounded-tr-lg border-t-2 border-r border-[#1f2a36] bg-[#b9d3ea]">
      <div className="flex h-[27px] shrink-0 items-center justify-between rounded-tr-lg bg-linear-to-b from-[#9db2d2] to-[#b9d0ec] pt-[4px] pr-[7px] pl-1">
        <h2 className="font-[Open_Sans,sans-serif] text-[11px] text-[#1b2533]">Project - Example.cpr</h2>
        <div className="flex gap-[2px]">
          <WinButton kind="min" />
          <WinButton kind="max" />
          <WinButton kind="close" />
        </div>
      </div>
      <div className="mr-[7px] flex min-h-0 flex-1 flex-col overflow-hidden bg-[#2b394a]">
        <Toolbar />
        <InfoLine />
        <div className="flex min-h-0 flex-1 overflow-hidden border-t border-[#7c8a98]">
          <Inspector />
          <TrackList />
          <div className="w-[11px] shrink-0 border-r border-[#3c4a59] bg-black">
            <div className="h-5 bg-[#495b6f]" />
          </div>
          <Arrangement />
          <RightRail />
        </div>
      </div>
    </section>
  );
}

/* ---------- transport panel ---------- */

const tag = "bg-[#4a627e] text-center text-[9px] text-[#b4c6da]";
const panelBox = "shrink-0 overflow-hidden rounded-xs border border-[#141d28] bg-black";

function Locator({ label, value, marker }: { label: React.ReactNode; value: string; marker: React.ReactNode }) {
  return (
    <div className="flex flex-1">
      <div className="flex w-[17px] flex-col gap-px text-[#b4c6da]">
        <div className="flex flex-1 items-center justify-center bg-[#4a627e]">{label}</div>
        <div className="flex flex-1 items-center justify-center bg-[#4a627e]">{marker}</div>
      </div>
      <div className="flex-1 text-right whitespace-pre">
        <div className="text-[12px] leading-[13px] font-bold text-white">{value}</div>
        <div className="flex items-center justify-end gap-1 text-[10px] leading-[12px] text-[#6a737d]">
          0.   0
          <span className="flex h-3 w-[17px] items-center justify-center bg-[#4a627e] text-[#b4c6da]">
            <Svg w={14} h={10}><path d="M2.500 1V9M5.500 1V9M8.500 1L12.500 5L8.500 9Z" /></Svg>
          </span>
        </div>
      </div>
    </div>
  );
}

function TransportPanel() {
  return (
    <section aria-label="Transport" className="absolute bottom-[8px] left-[156px] flex h-16 w-[782px] gap-[5px] border border-[#1c2734] bg-linear-to-b from-[#5a7492] to-[#3e5570] pt-1 pb-1 text-[11px]">
      <div className="flex w-[12px] shrink-0 justify-center border-r border-[#2f4258] text-[#1f2d3e]">
        <Svg w={8} h={8}><path d="M1 1H7M2 6L4 3L6 6Z" fill="currentColor" /></Svg>
      </div>
      <div className={`grid w-[14px] grid-cols-2 gap-px ${panelBox}`}>
        <span className="bg-[#2b3442]" /><span className="bg-[#2b3442]" />
      </div>
      <div className={`flex w-[78px] flex-col text-[#b9c0c8] ${panelBox}`}>
        {["Normal", "Stacked 2"].map((m, i) => (
          <label key={m} className="flex h-[19px] items-center pr-[3px] pl-[2px]">
            <Svg w={16} h={16} className="text-[#9aa3ab]">
              <circle cx="5" cy="5" r="4" fill="#c01818" stroke="#5d0d0d" />
              {i ? <path d="M5 9H12Q15 9 15 12Q15 14 12 14H6Q3 14 3 11" /> : <path d="M1 11.500H16M8 9V14" />}
            </Svg>
            <select aria-label={m} className="ml-[2px] min-w-0 flex-1 appearance-none bg-transparent text-[10px] whitespace-nowrap"><option>{m}</option></select>
            <Caret />
          </label>
        ))}
        <div className="mt-auto flex h-[13px] items-center border-t border-[#39434f] text-[9px]">
          <button className="h-full bg-[#dfe5ec] px-[2px] leading-3 whitespace-nowrap text-black">AUTO Q</button>
          <span className="ml-[5px]">ON</span>
        </div>
      </div>
      <div className={`flex w-[107px] flex-col ${panelBox}`}>
        <Locator
          label={<Svg w={9} h={9}><path d="M1.500 0V7.500H9" strokeWidth="1.500" /></Svg>}
          value="53.   1.  1.   0"
          marker={<Svg w={14} h={10}><path d="M0 2H4L9 8H14" strokeWidth="1.300" /></Svg>}
        />
        <Locator label="R" value="55.   1.  1.   0" marker={<Svg w={14} h={10}><path d="M0 8H4L9 2H14" strokeWidth="1.300" /></Svg>} />
      </div>
      <div className="flex w-[254px] shrink-0 flex-col gap-[4px]">
        <div className={`flex h-[26px] flex-col ${panelBox}`}>
          <div className="flex flex-1 items-center whitespace-pre text-white">
            <Svg w={8} h={14} className="ml-px text-[#8d969f]"><path d="M0 4.500H8M4 1V8M0 11.500H8" /></Svg>
            <span className="ml-[25px] text-[15px] leading-[18px] font-bold">24.  4.  4.  88</span>
            <Svg w={8} h={12} className="ml-[6px] text-[#767e87]"><path d="M6.500 0V9" /><circle cx="4" cy="9.500" r="2" fill="currentColor" /></Svg>
            <Svg w={4} h={14} className="ml-3 text-[#767e87]"><path d="M1 0L2 14" /></Svg>
            <span className="ml-auto text-[11px] leading-[18px] font-bold">0:00:47.967</span>
            <Svg w={10} h={10} className="mx-[3px] text-[#767e87]"><circle cx="5" cy="5" r="4" /><path d="M5 2V5H8" /></Svg>
          </div>
          <div className="mx-px mb-px h-[3px] bg-[#2b3138]"><div className="h-full w-[40px] bg-[#3fd083]" /></div>
        </div>
        <div className="flex h-6 overflow-hidden rounded-sm border-2 border-black">
          <TransportKey label="Go to start" w="w-[18px]">{icoPrev}</TransportKey>
          <TransportKey label="Rewind" w="w-[35px]">{icoRew}</TransportKey>
          <TransportKey label="Forward" w="w-[36px]">{icoFwd}</TransportKey>
          <TransportKey label="Go to end" w="w-[21px]">{icoNext}</TransportKey>
          <TransportKey label="Cycle" w="w-[36px]">{icoCycle}</TransportKey>
          <TransportKey label="Stop" w="w-[35px]" on>{icoStop}</TransportKey>
          <TransportKey label="Play" w="w-[36px]">{icoPlay}</TransportKey>
          <TransportKey label="Record" w="flex-1">{icoRec}</TransportKey>
        </div>
      </div>
      <div className={`flex w-[107px] flex-col text-[9px] leading-[13px] text-[#aab2bb] ${panelBox}`}>
        <div className="flex h-[14px] border-b border-[#39434f]">
          <span className={`w-[34px] ${tag}`}>CLICK</span>
          <span className="ml-1 flex-1">OFF</span>
          <span className="flex w-[19px] items-center justify-center bg-[#dfe5ec] text-black">
            <Svg w={15} h={10}><path d="M1.500 1V9M4.500 1V9M7 5H14M10.500 1.500V8.500M8 2.500L13 7.500M13 2.500L8 7.500" /></Svg>
          </span>
        </div>
        <div className="flex h-[13px]">
          <span className={`w-[34px] ${tag}`}>TEMPO</span>
          <span className="ml-1 flex-1">FIXED</span>
          <span className="pr-[3px] text-[11px] font-bold text-white">4/4</span>
        </div>
        <div className="flex-1 pr-[3px] text-right text-[12px] leading-[12px] font-bold text-white">120.000</div>
        <div className="flex h-[13px] border-t border-[#39434f] leading-[12px]">
          <span className={`w-[34px] ${tag}`}>SYNC</span>
          <span className="ml-1 flex-1">INT.</span>
          <span className="pr-[3px] text-[10px] text-[#8c959e]">Offline</span>
        </div>
      </div>
      <div className={`flex w-[86px] flex-col text-[10px] leading-[12px] text-[#aab2bb] ${panelBox}`}>
        <div className="flex h-[14px] justify-between border-b border-[#39434f] pr-1 text-[9px] leading-[13px]">
          <button className={`w-[33px] ${tag}`}>SHOW</button>
          <span>MARKER</span>
        </div>
        <div className="grid flex-1 grid-cols-5 text-center">
          {Array.from({ length: 15 }, (_, i) => (
            <button key={i}>{i + 1}</button>
          ))}
        </div>
      </div>
      <div className={`grid w-[14px] grid-cols-2 gap-px ${panelBox}`}>
        <span className="bg-[#2b3442]" /><span className="bg-[#2b3442]" />
      </div>
      <div className={`relative grid w-[37px] grid-cols-2 gap-px ${panelBox}`}>
        <div className="flex items-end bg-[#2b3442] pl-[2px]">
          <span className="h-[15px] w-3 bg-linear-to-b from-[#36c860] to-[#46c8ea]" />
        </div>
        <div className="bg-[#2b3442]" />
        <span className="absolute top-3 h-px w-full bg-[#c0c6cc]" />
      </div>
      <div className="w-[9px] shrink-0 rounded-full border border-[#1c2734] bg-[#4c6681] pt-[11px]">
        <div className="mx-auto size-[6px] rounded-full bg-[#e8f0f8]" />
      </div>
      <div className="flex flex-1 justify-center border-l border-[#2f4258] text-[#1f2d3e]">
        <Svg w={8} h={8}><path d="M1 1H7V4H1ZM3 7H6" /></Svg>
      </div>
    </section>
  );
}

/* ---------- scrollbars & pointer ---------- */

function VScroll() {
  return (
    <div className="flex w-4 shrink-0 flex-col items-center bg-[#eeeef0] text-[#222]">
      <button aria-label="Scroll up" className="flex h-[18px] items-center"><Svg w={7} h={4}><path d="M0 4H7L3.500 0Z" fill="currentColor" stroke="none" /></Svg></button>
      <div className="flex h-[528px] w-[13px] items-center justify-center rounded-xs border border-[#8c8c92] bg-linear-to-r from-[#f2f2f3] to-[#bcbcc1]">
        <Svg w={6} h={7}><path d="M0 1.500H6M0 3.500H6M0 5.500H6" stroke="#555" /></Svg>
      </div>
      <button aria-label="Scroll down" className="mt-auto flex h-[16px] items-center"><Caret className="text-[#222]" /></button>
    </div>
  );
}

function HScroll() {
  return (
    <div className="flex h-[17px] shrink-0 items-center bg-[#f0f0f2] text-[#222]">
      <button aria-label="Scroll left" className="w-[93px] pl-[6px]"><Svg w={4} h={7}><path d="M4 0V7L0 3.500Z" fill="currentColor" stroke="none" /></Svg></button>
      <div className="h-[13px] flex-1 rounded-xs border border-[#9a9a9f] bg-linear-to-b from-[#f4f4f5] to-[#c2c2c8]" />
      <button aria-label="Scroll right" className="flex w-4 justify-center"><Svg w={4} h={7}><path d="M0 0V7L4 3.500Z" fill="currentColor" stroke="none" /></Svg></button>
      <span className="w-[18px]" />
    </div>
  );
}

function Pointer() {
  return (
    <div className="pointer-events-none absolute top-[81px] left-[67px] h-[54px] w-[60px]">
      <div className="absolute top-[1px] left-[7px] size-[51px] rounded-full bg-[#158a8c]/65" />
      <div className="absolute top-[17px] left-[1px] size-[18px] rounded-full border-2 border-[#a13a5b]/70" />
      <svg width="12" height="19" viewBox="0 0 12 19" className="absolute top-[18px] left-[28px]" aria-hidden="true">
        <path d="M0.500 0.500V15L4 12L6.500 18L9 17L6.500 11H11.500Z" fill="#fff" stroke="#222" strokeWidth="0.800" />
      </svg>
    </div>
  );
}

export default function App() {
  return (
    <div className="relative flex h-screen min-w-0 flex-col overflow-hidden border-x-2 border-t border-b-2 border-x-[#9a9fa6] border-t-black border-b-[#161c24] bg-[#212d38] font-[Liberation_Sans,Arial,sans-serif]">
      <TitleBar />
      <MenuBar />
      <div className="flex min-h-0 flex-1">
        <main className="relative min-w-0 flex-1 overflow-hidden">
          <PluginWindow />
          <ProjectWindow />
        </main>
        <VScroll />
      </div>
      <HScroll />
      <TransportPanel />
      <Pointer />
    </div>
  );
}
